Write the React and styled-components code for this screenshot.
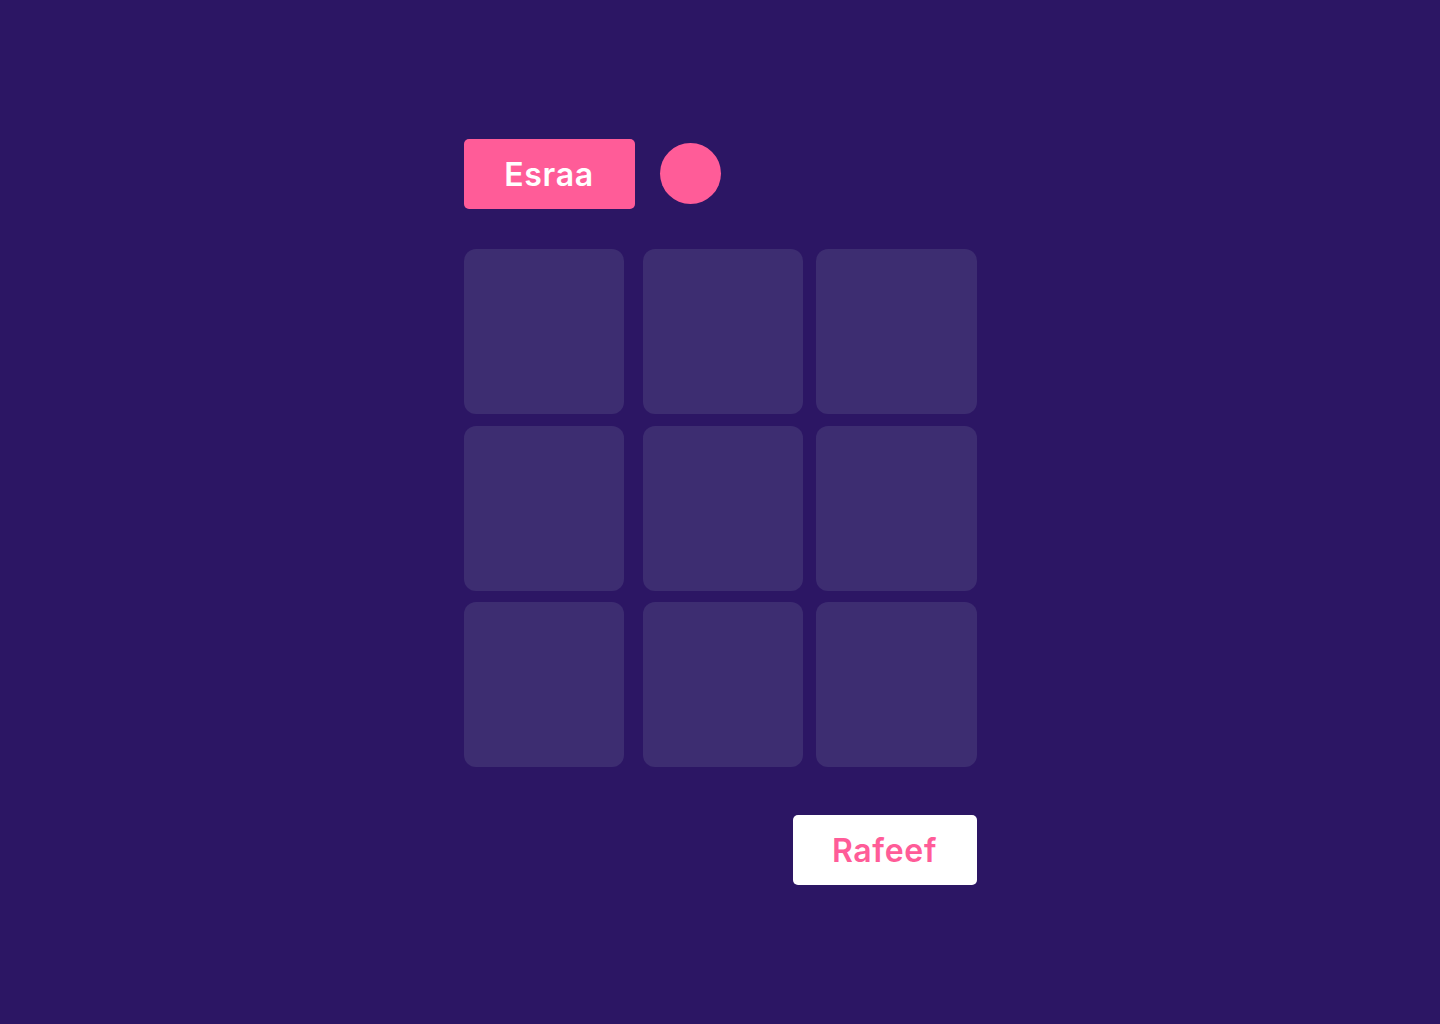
import React from 'react';
import styled, { createGlobalStyle } from 'styled-components';

const GlobalStyle = createGlobalStyle`
    html, body {
        margin: 0;
        padding: 0;
        background: #2c1664;
        font-family: "Inter", "Open Sans", sans-serif;
    }
`;

const Page = styled.div`
    min-height: 1024px;
    display: flex;
    justify-content: center;
    padding-top: 139px;
    box-sizing: border-box;
`;

const Board = styled.div`
    width: 513px;
    display: flex;
    flex-direction: column;
`;

const TopRow = styled.div`
    display: flex;
    align-items: center;
    gap: 25px;
    margin-bottom: 40px;
`;

const Player = styled.div`
    height: 70px;
    width: ${props => props.width}px;
    border-radius: 5px;
    display: flex;
    align-items: center;
    justify-content: center;
    font-size: 32px;
    font-weight: 600;
    letter-spacing: 0.7px;
    background: ${props => (props.active ? '#ff5c98' : '#ffffff')};
    color: ${props => (props.active ? '#ffffff' : '#ff5c98')};
`;

const Turn = styled.div`
    width: 61px;
    height: 61px;
    border-radius: 50%;
    background: #ff5c98;
    margin-top: -2px;
`;

const Grid = styled.div`
    display: grid;
    grid-template-columns: 179px 173px 161px;
    grid-auto-rows: 165px;
    row-gap: 11.5px;
`;

const Cell = styled.div`
    width: ${props => (props.last ? 161 : 160)}px;
    border-radius: 12px;
    background: #3d2d71;
`;

const BottomRow = styled.div`
    display: flex;
    justify-content: flex-end;
    margin-top: 48px;
`;

const App = () => {
    const cells = Array.from({ length: 9 }, (_, i) => i);
    return (
        <Page>
            <GlobalStyle />
            <Board>
                <TopRow>
                    <Player active width={171}>Esraa</Player>
                    <Turn />
                </TopRow>
                <Grid>
                    {cells.map(i => (
                        <Cell key={i} last={i % 3 === 2} />
                    ))}
                </Grid>
                <BottomRow>
                    <Player width={184}>Rafeef</Player>
                </BottomRow>
            </Board>
        </Page>
    );
};

export default App;
